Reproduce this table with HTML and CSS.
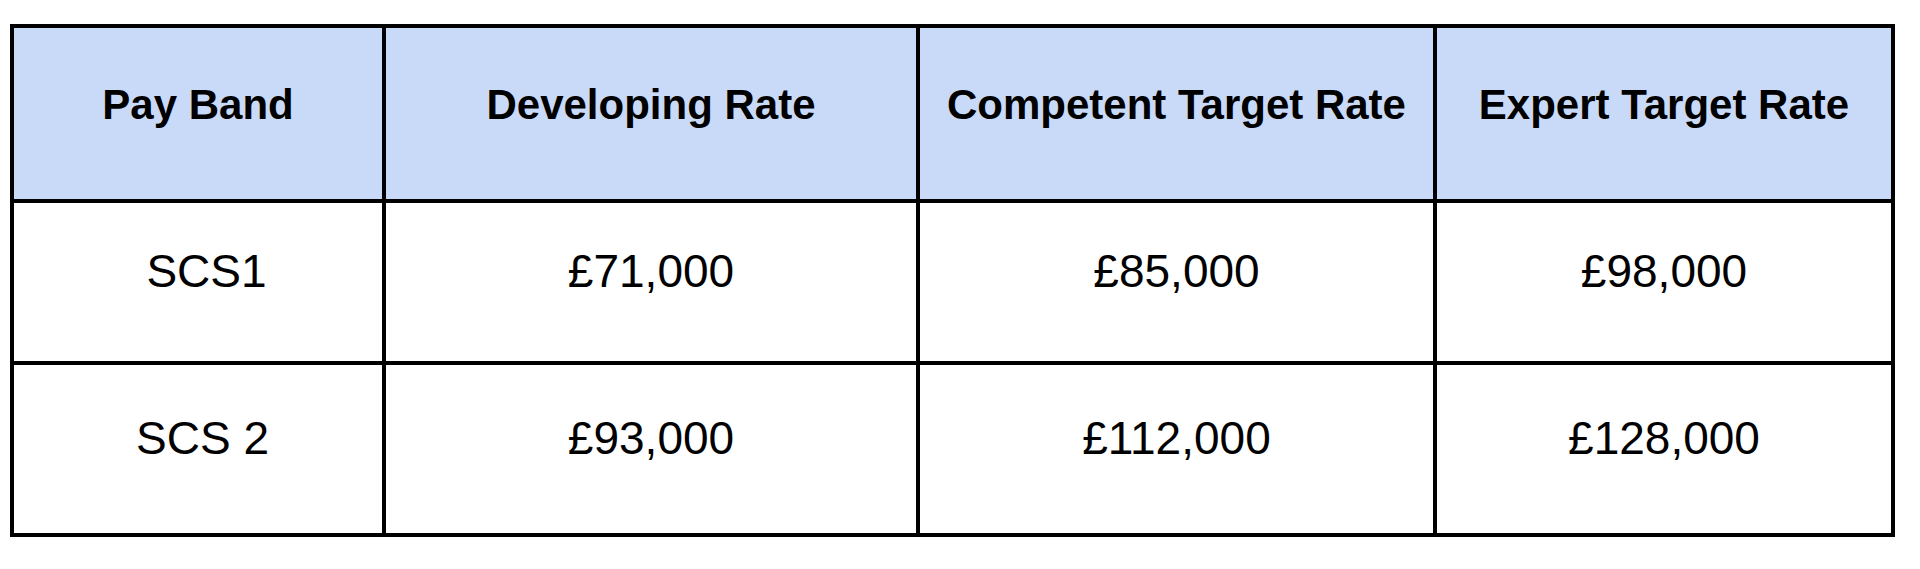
FILE: index.html
```html
<!DOCTYPE html>
<html lang="en">
<head>
<meta charset="utf-8">
<title>SCS Pay Bands</title>
<link rel="stylesheet" href="styles.css">
</head>
<body>
<div class="page">
  <div class="pay-table" role="table">
    <div class="cell head" role="columnheader">Pay Band</div>
    <div class="cell head" role="columnheader">Developing Rate</div>
    <div class="cell head" role="columnheader">Competent Target Rate</div>
    <div class="cell head" role="columnheader">Expert Target Rate</div>

    <div class="cell band band-one" role="cell">SCS1</div>
    <div class="cell" role="cell">£71,000</div>
    <div class="cell" role="cell">£85,000</div>
    <div class="cell" role="cell">£98,000</div>

    <div class="cell band band-two" role="cell">SCS 2</div>
    <div class="cell" role="cell">£93,000</div>
    <div class="cell" role="cell">£112,000</div>
    <div class="cell" role="cell">£128,000</div>
  </div>
</div>
</body>
</html>
```
FILE: styles.css
```css
html, body {
  margin: 0;
  padding: 0;
  background: #ffffff;
}

body {
  font-family: "Liberation Sans", Arial, sans-serif;
  color: #000000;
}

.page {
  padding: 24px 0 0 10px;
}

.pay-table {
  display: grid;
  grid-template-columns: 368px 530px 513px 454px;
  grid-template-rows: 171px 158px 168px;
  gap: 4px;
  padding: 4px;
  width: max-content;
  background: #000000;
}

.cell {
  display: flex;
  align-items: center;
  justify-content: center;
  background: #ffffff;
  font-size: 46px;
  padding-bottom: 22px;
  box-sizing: border-box;
  white-space: nowrap;
}

.cell.head {
  background: #c9daf8;
  font-size: 42px;
  font-weight: bold;
  padding-bottom: 18px;
}

.cell.band-one {
  padding-left: 17px;
}

.cell.band-two {
  padding-left: 9px;
}
```
